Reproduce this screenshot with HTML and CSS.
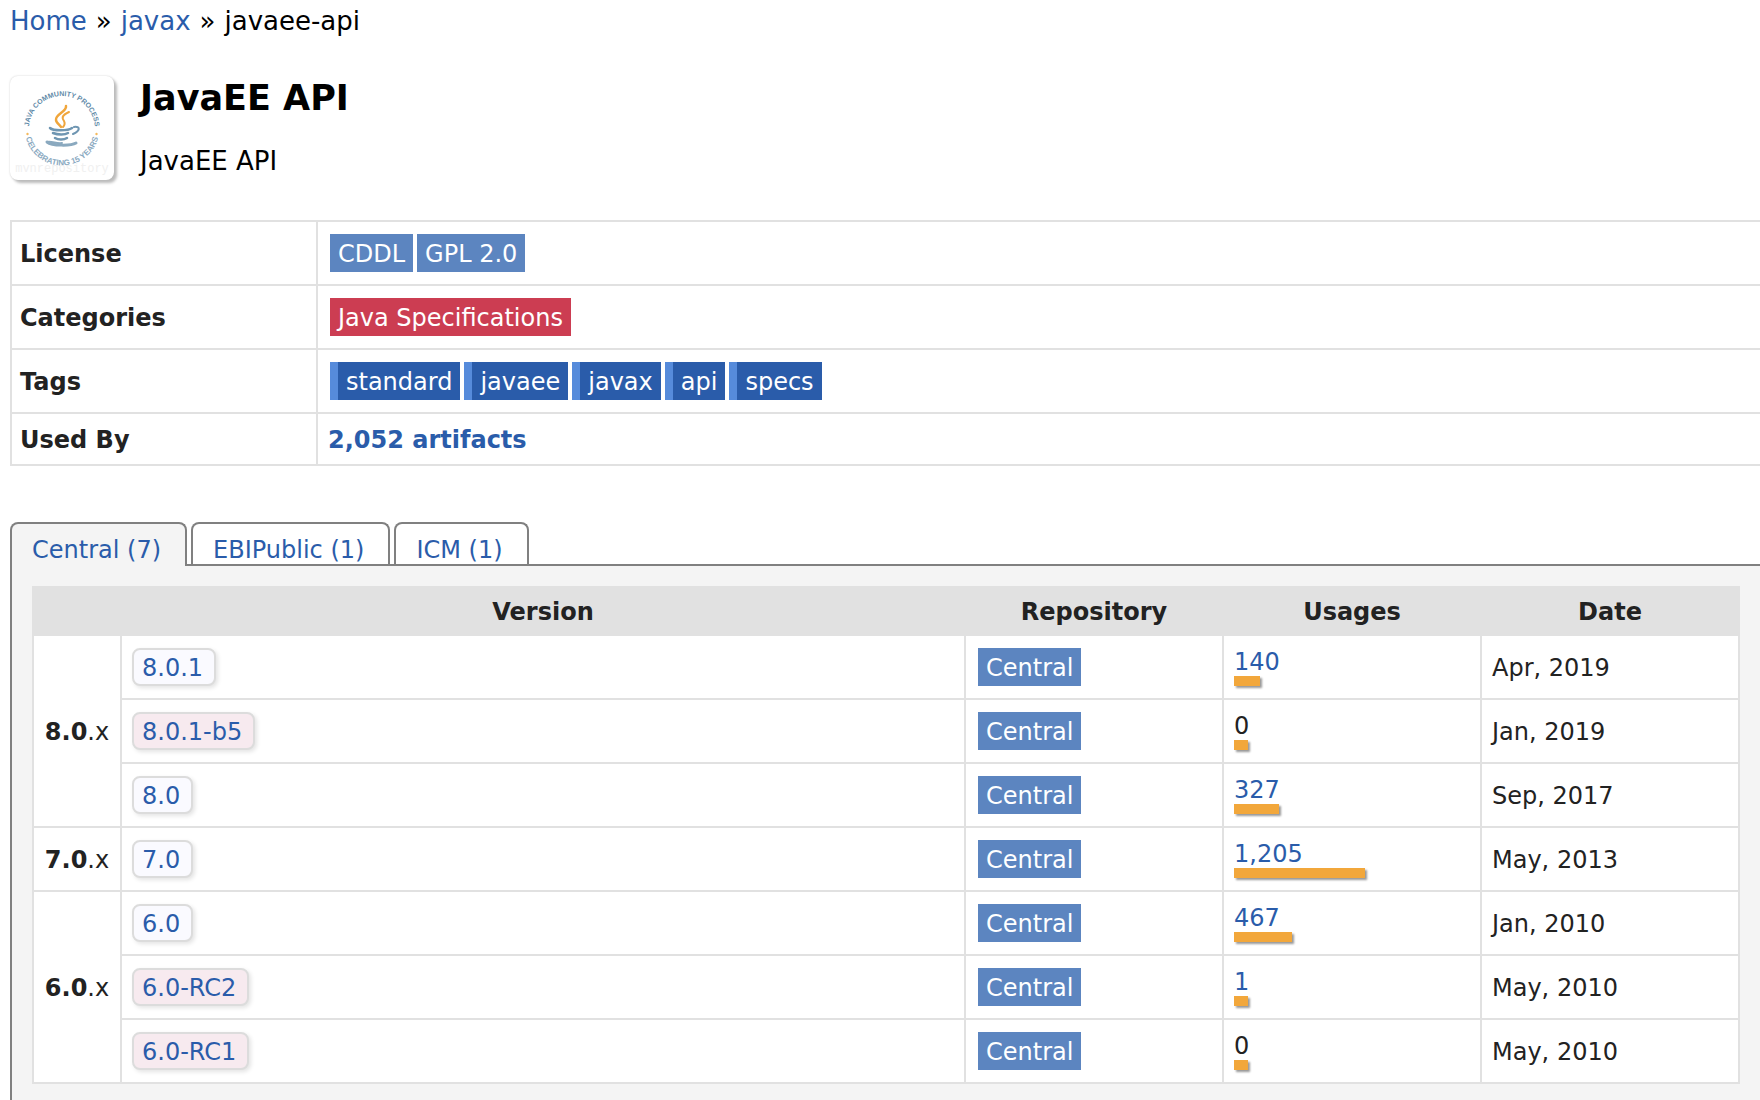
FILE: index.html
```html
<!DOCTYPE html>
<html lang="en">

<head>
    <meta charset="UTF-8">
    <meta name="viewport" content="width=device-width, initial-scale=1.0">
    <title>JavaEE API</title>
    <link rel="stylesheet" href="styles.css">
</head>

<body>
    <nav class="breadcrumb">
        <a href="#">Home</a>
        <span>»</span>
        <a href="#">javax</a>
        <span>»</span>
        <span>javaee-api</span>
    </nav>

    <header class="artifact">
        <svg class="logo" viewBox="0 0 104 104" role="img" aria-label="Java Community Process">
            <defs>
                <path id="ring-top" d="M19 53 A33 33 0 0 1 85 53" />
                <path id="ring-bottom" d="M14.5 52 A37.5 37.5 0 0 0 89.5 52" />
            </defs>
            <text class="ring-text"><textPath href="#ring-top" startOffset="50%">JAVA COMMUNITY PROCESS</textPath></text>
            <text class="ring-text ring-light"><textPath href="#ring-bottom" startOffset="50%">CELEBRATING 15 YEARS</textPath></text>
            <circle cx="17.5" cy="58" r="1.2" fill="#f5b95c" />
            <circle cx="86.5" cy="58" r="1.2" fill="#f5b95c" />
            <g fill="none" stroke-linecap="round">
                <path d="M56 30 C57 36 45 38 46 44 C46 47 50 49 51 51" stroke="#f0a63c" stroke-width="2.5" />
                <path d="M59 36 C53 39 51 41 54 45 C55 47 55 49 53 51" stroke="#f0a63c" stroke-width="2" />
                <path d="M40 52 C43 55 58 55 62 52" stroke="#6f96b2" stroke-width="2.5" />
                <path d="M43 57 C48 59 55 59 58 57" stroke="#6f96b2" stroke-width="2.5" />
                <path d="M45 62 C48 64 54 64 57 62" stroke="#6f96b2" stroke-width="2.5" />
                <path d="M64 51 C71 50 70 55 63 58" stroke="#6f96b2" stroke-width="2" />
                <path d="M37 66 C42 70 61 70 66 67" stroke="#8aa9bf" stroke-width="3" />
                <path d="M37 66 C42 65 47 68 52 67" stroke="#8aa9bf" stroke-width="2" />
            </g>
            <text class="watermark" x="52" y="96">mvnrepository</text>
        </svg>
        <div class="artifact-text">
            <h1>JavaEE API</h1>
            <p>JavaEE API</p>
        </div>
    </header>

    <table class="info">
        <tr>
            <th scope="row">License</th>
            <td><div class="chips"><span class="chip">CDDL</span><span class="chip">GPL 2.0</span></div></td>
        </tr>
        <tr>
            <th scope="row">Categories</th>
            <td><div class="chips"><a class="chip category" href="#">Java Specifications</a></div></td>
        </tr>
        <tr>
            <th scope="row">Tags</th>
            <td>
                <div class="chips">
                    <a class="chip tag" href="#">standard</a>
                    <a class="chip tag" href="#">javaee</a>
                    <a class="chip tag" href="#">javax</a>
                    <a class="chip tag" href="#">api</a>
                    <a class="chip tag" href="#">specs</a>
                </div>
            </td>
        </tr>
        <tr>
            <th scope="row">Used By</th>
            <td class="text"><a class="used-by" href="#">2,052 artifacts</a></td>
        </tr>
    </table>

    <nav class="tabs">
        <a class="tab active" href="#">Central (7)</a>
        <a class="tab" href="#">EBIPublic (1)</a>
        <a class="tab" href="#">ICM (1)</a>
    </nav>

    <main class="panel">
        <table class="versions">
            <colgroup>
                <col class="col-group">
                <col>
                <col class="col-data">
                <col class="col-data">
                <col class="col-data">
            </colgroup>
            <thead>
                <tr>
                    <th></th>
                    <th>Version</th>
                    <th>Repository</th>
                    <th>Usages</th>
                    <th>Date</th>
                </tr>
            </thead>
            <tbody>
                <tr>
                    <td class="text group" rowspan="3"><b>8.0</b>.x</td>
                    <td><a class="version" href="#">8.0.1</a></td>
                    <td><div class="chips"><a class="chip" href="#">Central</a></div></td>
                    <td class="usages"><a href="#">140</a><div class="bar" style="width: 26px"></div></td>
                    <td class="text">Apr, 2019</td>
                </tr>
                <tr>
                    <td><a class="version beta" href="#">8.0.1-b5</a></td>
                    <td><div class="chips"><a class="chip" href="#">Central</a></div></td>
                    <td class="usages">0<div class="bar" style="width: 14px"></div></td>
                    <td class="text">Jan, 2019</td>
                </tr>
                <tr>
                    <td><a class="version" href="#">8.0</a></td>
                    <td><div class="chips"><a class="chip" href="#">Central</a></div></td>
                    <td class="usages"><a href="#">327</a><div class="bar" style="width: 45px"></div></td>
                    <td class="text">Sep, 2017</td>
                </tr>
                <tr>
                    <td class="text group"><b>7.0</b>.x</td>
                    <td><a class="version" href="#">7.0</a></td>
                    <td><div class="chips"><a class="chip" href="#">Central</a></div></td>
                    <td class="usages"><a href="#">1,205</a><div class="bar" style="width: 131px"></div></td>
                    <td class="text">May, 2013</td>
                </tr>
                <tr>
                    <td class="text group" rowspan="3"><b>6.0</b>.x</td>
                    <td><a class="version" href="#">6.0</a></td>
                    <td><div class="chips"><a class="chip" href="#">Central</a></div></td>
                    <td class="usages"><a href="#">467</a><div class="bar" style="width: 58px"></div></td>
                    <td class="text">Jan, 2010</td>
                </tr>
                <tr>
                    <td><a class="version beta" href="#">6.0-RC2</a></td>
                    <td><div class="chips"><a class="chip" href="#">Central</a></div></td>
                    <td class="usages"><a href="#">1</a><div class="bar" style="width: 14px"></div></td>
                    <td class="text">May, 2010</td>
                </tr>
                <tr>
                    <td><a class="version beta" href="#">6.0-RC1</a></td>
                    <td><div class="chips"><a class="chip" href="#">Central</a></div></td>
                    <td class="usages">0<div class="bar" style="width: 14px"></div></td>
                    <td class="text">May, 2010</td>
                </tr>
            </tbody>
        </table>
    </main>
</body>

</html>
```
FILE: styles.css
```css
* {
    box-sizing: border-box;
}

body {
    display: flex;
    flex-direction: column;
    min-height: 100vh;
    margin: 0;
    padding: 6px 0 0 10px;
    font-family: Verdana, 'DejaVu Sans', sans-serif;
    font-size: 26px;
    line-height: 30px;
    color: #000;
    background-color: #fff;
}

a {
    color: #2a5caa;
    text-decoration: none;
}

.breadcrumb {
    display: flex;
    gap: 9px;
}

.artifact {
    display: flex;
    gap: 26px;
    margin: 40px 0;
}

.logo {
    width: 104px;
    height: 104px;
    border-radius: 8px;
    background-color: #fff;
    box-shadow: 3px 3px 3px #bbb, 0 0 2px #ccc;
}

.ring-text {
    font-family: 'Liberation Sans', sans-serif;
    font-size: 7px;
    font-weight: bold;
    fill: #5f8aa8;
    text-anchor: middle;
}

.ring-light {
    font-size: 8px;
    fill: #8aa9bf;
}

.watermark {
    font-family: 'Liberation Mono', monospace;
    font-size: 12px;
    fill: #f0f0f0;
    text-anchor: middle;
}

.artifact-text {
    padding-top: 2px;
}

h1 {
    margin: 0 0 28px;
    font-size: 35px;
    line-height: 40px;
}

p {
    margin: 0;
}

table {
    width: 100%;
    border-collapse: collapse;
    table-layout: fixed;
    font-size: 24px;
    color: #222;
}

th,
td {
    border: 2px solid #e1e1e1;
    background-color: #fff;
}

th {
    padding: 9px 8px 7px;
}

td {
    padding: 10px;
}

.text {
    padding: 11px 10px 9px;
}

.info th {
    width: 306px;
    text-align: left;
}

.info td {
    border-right: none;
}

.used-by {
    font-weight: bold;
}

.chips {
    display: flex;
    gap: 4px;
    padding: 2px;
}

.chip {
    padding: 5px 8px 3px;
    background-color: #5c85c0;
    color: #fff;
}

.category {
    background-color: #cc3d52;
}

.tag {
    background-color: #2a5caa;
    border-left: 8px solid #568bdb;
}

.tabs {
    display: flex;
    gap: 4px;
    margin-top: 56px;
    font-size: 24px;
}

.tab {
    padding: 11px 24px 0 20px;
    height: 42px;
    border: 2px solid #808080;
    border-bottom: none;
    border-radius: 8px 8px 0 0;
}

.active {
    position: relative;
    height: 44px;
    margin-bottom: -2px;
    background-color: #f4f4f4;
}

.panel {
    flex: 1;
    padding: 20px 20px 0;
    border: 2px solid #808080;
    border-width: 2px 0 0 2px;
    background-color: #f4f4f4;
}

.versions th {
    background-color: #e1e1e1;
}

.col-group {
    width: 88px;
}

.col-data {
    width: 258px;
}

.group {
    padding-left: 0;
    padding-right: 0;
    text-align: center;
}

.version {
    display: inline-block;
    margin: 2px 0;
    padding: 3px 11px 1px 8px;
    border: 2px solid #dcdcdc;
    border-radius: 8px;
    background-color: #fafaff;
    box-shadow: 2px 2px 4px #e4e4e4;
    vertical-align: top;
}

.beta {
    background-color: #f7eaef;
}

.usages {
    line-height: 28px;
}

.bar {
    height: 10px;
    background-color: #f2a73b;
    box-shadow: 2px 2px 2px #999;
}
```
